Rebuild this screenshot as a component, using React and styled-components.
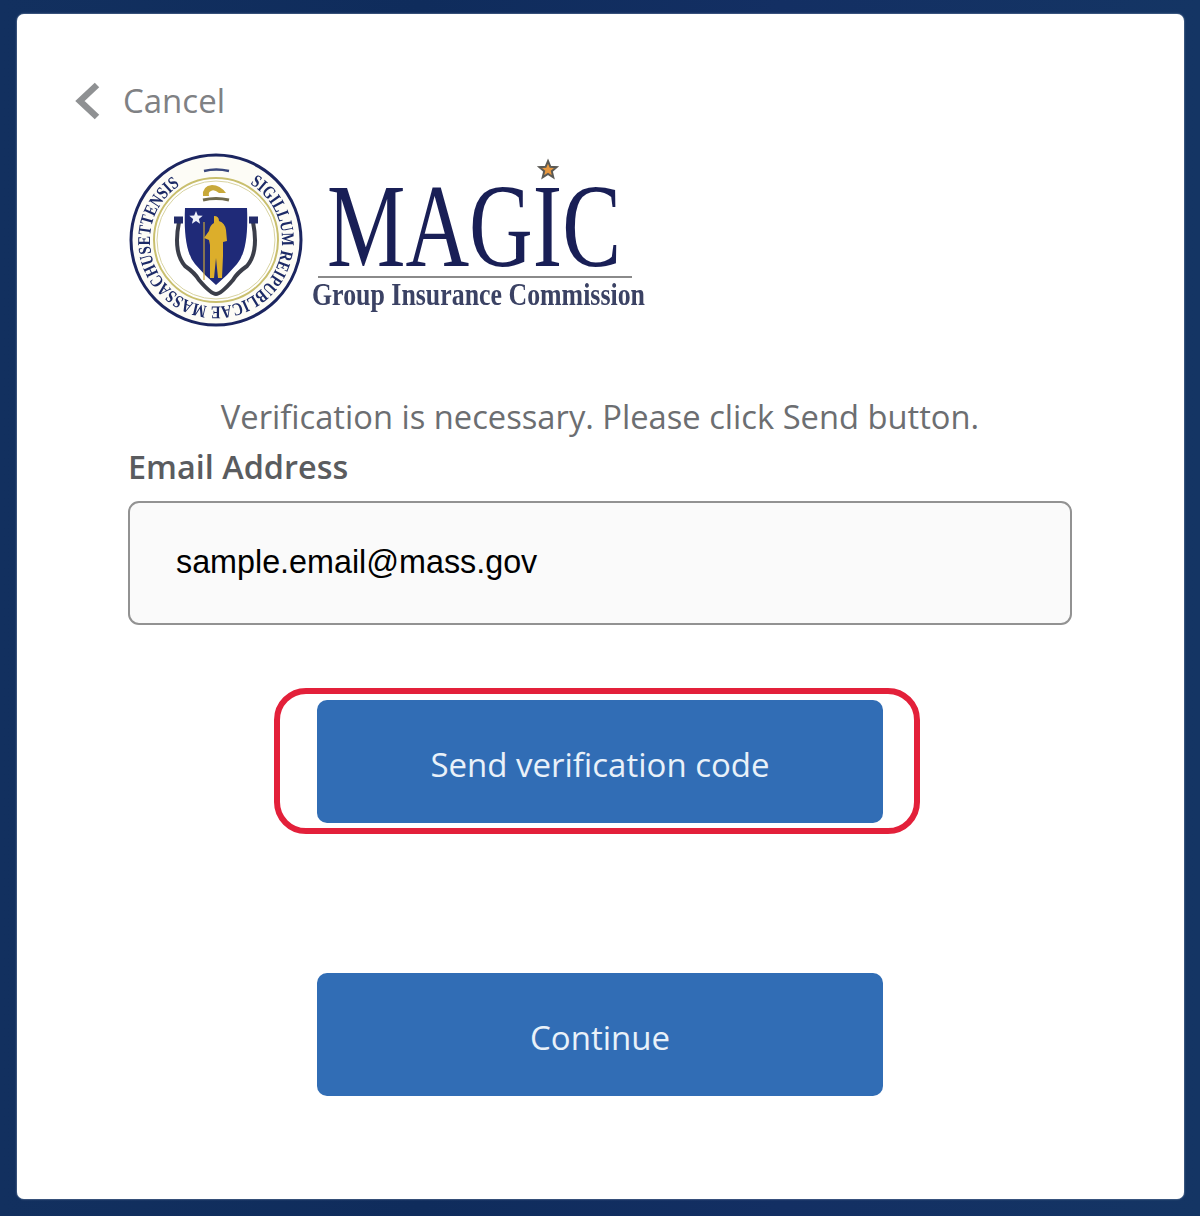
import styled, { createGlobalStyle } from 'styled-components';

const GlobalStyle = createGlobalStyle`
  html, body {
    margin: 0;
    padding: 0;
    background: #12305f;
  }
`;

const Page = styled.div`
  box-sizing: border-box;
  width: 1200px;
  height: 1216px;
  padding: 14px 16px 17px 17px;
  background: linear-gradient(90deg, #12305f 0%, #0f2c5c 35%, #132f63 65%, #143564 100%);
  font-family: "Open Sans", "Noto Sans", sans-serif;
`;

const Card = styled.main`
  box-sizing: border-box;
  height: 1185px;
  padding-top: 66px;
  background: #fff;
  border-radius: 7px;
  box-shadow: 0 0 2px #9fb0c6;
`;

const BackLink = styled.a`
  display: flex;
  align-items: center;
  gap: 23px;
  height: 40px;
  margin-left: 58px;
  font-size: 33px;
  color: #7f8184;
`;

const Chevron = styled.svg`
  margin-top: 1px;
`;

const Body = styled.div`
  display: flex;
  flex-direction: column;
  margin: 0 112px 0 111px;
`;

const Logo = styled.svg`
  display: block;
  width: 640px;
  height: 180px;
  margin-top: 30px;
  filter: blur(0.6px);
`;

const Message = styled.p`
  margin: 67px 0 0;
  font-size: 32.7px;
  line-height: 40px;
  text-align: center;
  color: #6c6e71;
`;

const Label = styled.label`
  margin-top: 9px;
  font-size: 32.4px;
  font-weight: 600;
  line-height: 40px;
  color: #5a5c5f;
`;

const EmailInput = styled.input`
  box-sizing: border-box;
  width: 100%;
  height: 124px;
  margin-top: 15px;
  padding: 0 0 2px 46px;
  background: #fafafa;
  border: 2px solid #929292;
  border-radius: 11px;
  font-family: "Liberation Sans", Arial, sans-serif;
  font-size: 32.3px;
  color: #000;
  outline: none;
`;

const Highlight = styled.div`
  box-sizing: border-box;
  align-self: flex-start;
  width: 646px;
  height: 146px;
  margin: 63px 0 0 146px;
  padding: 6px 31px 5px 37px;
  border: 6px solid #e3203a;
  border-radius: 32px;
`;

const ActionButton = styled.button`
  display: block;
  align-self: center;
  width: 566px;
  height: 123px;
  margin-top: ${({ $top }) => $top || 0}px;
  padding: 6px 0 0;
  background: #316db5;
  border: none;
  border-radius: 10px;
  font-family: inherit;
  font-size: 33px;
  color: #e9f1f9;
`;

function Star({ cx, cy, r, inner, fill, stroke }) {
  const points = [];
  for (let i = 0; i < 10; i++) {
    const radius = i % 2 ? inner : r;
    const a = (Math.PI / 5) * i - Math.PI / 2;
    points.push(`${(cx + radius * Math.cos(a)).toFixed(1)},${(cy + radius * Math.sin(a)).toFixed(1)}`);
  }
  return <polygon points={points.join(' ')} fill={fill} stroke={stroke} strokeWidth="2" />;
}

function MagicLogo() {
  return (
    <Logo viewBox="128 150 640 180">
      <defs>
        <path id="sealText" d="M 250 184 A 66 66 0 1 1 182 184" />
      </defs>

      {/* seal */}
      <circle cx="216" cy="240" r="85" fill="#fdfcf6" stroke="#1b2560" strokeWidth="3" />
      <circle cx="216" cy="240" r="62" fill="#fff" stroke="#c9bf6e" strokeWidth="2" />
      <circle cx="216" cy="240" r="59" fill="none" stroke="#d8d3a0" strokeWidth="1" />
      <text
        fontFamily='"Liberation Serif", serif'
        fontWeight="700"
        fontSize="18"
        fill="#1c2a66"
        textLength="340"
        lengthAdjust="spacingAndGlyphs"
      >
        <textPath href="#sealText" textLength="340" lengthAdjust="spacingAndGlyphs">
          SIGILLUM REIPUBLICAE MASSACHUSETTENSIS
        </textPath>
      </text>
      <path d="M204 171 q12 -3 25 0" stroke="#39477c" strokeWidth="2.5" fill="none" />

      {/* crest arm */}
      <path d="M203 200 q13 -3 26 0" stroke="#6f6a4c" strokeWidth="3" fill="none" />
      <path d="M203 196 q-1 -10 9 -11 q8 0 14 8 l-7 0 q-5 -4 -8 -2 q-3 1 -2 5 z" fill="#c8a93a" />

      {/* ribbon */}
      <path
        d="M179 222 q-6 30 6 44 q10 7 14 14 q12 14 17 14 q5 0 17 -14 q4 -7 14 -14 q12 -14 6 -44"
        fill="none"
        stroke="#3b3e4a"
        strokeWidth="4"
      />
      <path d="M174 220 h9 M249 220 h9" stroke="#232c6a" strokeWidth="7" />

      {/* shield */}
      <path d="M185 208 h62 q2 42 -10 56 q-10 12 -21 21 q-11 -9 -21 -21 q-12 -14 -10 -56 z" fill="#1f2a78" />
      <Star cx={196} cy={218} r={7} inner={3} fill="#eef1fa" stroke="none" />
      <path
        d="M214 216 q5 0 5 5 q6 2 7 9 l1 11 l-4 1 l0 14 l-1 22 l-4 0 l-2 -20 l-2 20 l-4 0 l0 -33 l-1 -5 l-5 -2 l5 -7 q1 -6 5 -8 z"
        fill="#dcae2b"
      />
      <path d="M204 222 v58" stroke="#c9a43a" strokeWidth="1.2" />

      {/* wordmark */}
      <Star cx={548} cy={170} r={9} inner={4} fill="#e8983f" stroke="#5b5a55" />
      <text
        x="327"
        y="266"
        fontFamily='"Liberation Serif", serif'
        fontSize="119"
        fill="#191f56"
        textLength="294"
        lengthAdjust="spacingAndGlyphs"
      >
        MAGIC
      </text>
      <path d="M318 277 H632" stroke="#8a8a8a" strokeWidth="2" />
      <text
        x="312"
        y="305"
        fontFamily='"Liberation Serif", serif'
        fontWeight="700"
        fontSize="31"
        fill="#3b4264"
        textLength="333"
        lengthAdjust="spacingAndGlyphs"
      >
        Group Insurance Commission
      </text>
    </Logo>
  );
}

export default function App() {
  return (
    <>
      <GlobalStyle />
      <Page>
        <Card>
          <BackLink>
            <Chevron width="25" height="38" viewBox="0 0 25 38" fill="none">
              <path d="M22 3 L5 19 L22 35" stroke="#8f9193" strokeWidth="6.5" />
            </Chevron>
            Cancel
          </BackLink>
          <Body>
            <MagicLogo />
            <Message>Verification is necessary. Please click Send button.</Message>
            <Label htmlFor="email">Email Address</Label>
            <EmailInput id="email" readOnly value="sample.email@mass.gov" />
            <Highlight>
              <ActionButton>Send verification code</ActionButton>
            </Highlight>
            <ActionButton $top={139}>Continue</ActionButton>
          </Body>
        </Card>
      </Page>
    </>
  );
}
